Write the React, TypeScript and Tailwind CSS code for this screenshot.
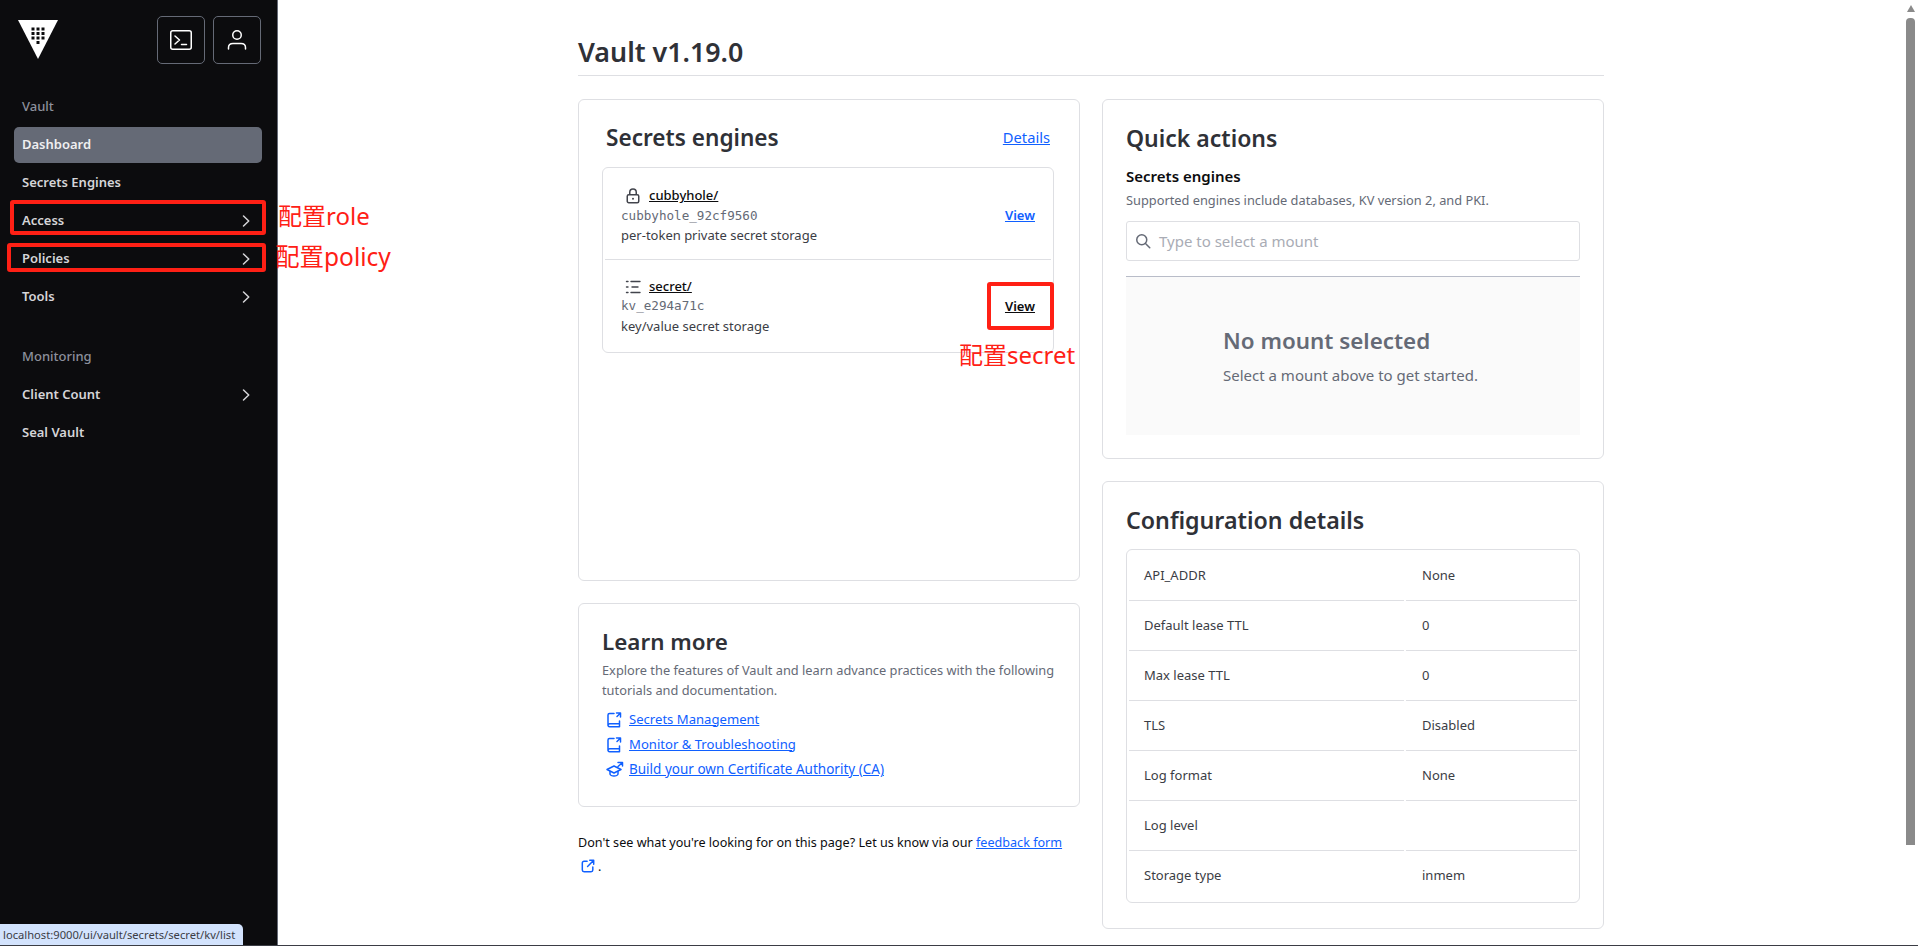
import React from "react";

const Chevron = () => (
  <svg width="16" height="16" viewBox="0 0 16 16" fill="none" stroke="#d5d5d8" strokeWidth="1.5" strokeLinecap="round" strokeLinejoin="round">
    <path d="M5.5 3 10.75 8 5.5 13" />
  </svg>
);

const Logo = () => (
  <svg width="40" height="39" viewBox="0 0 40 39">
    <path d="M0 0h40L20 39z" fill="#fff" />
    <g fill="#0c0c0e">
      <rect x="13.5" y="7.5" width="3" height="3" />
      <rect x="18.5" y="7.5" width="3" height="3" />
      <rect x="23.5" y="7.5" width="3" height="3" />
      <rect x="13.5" y="12" width="3" height="3" />
      <rect x="18.5" y="12" width="3" height="3" />
      <rect x="23.5" y="12" width="3" height="3" />
      <rect x="13.5" y="16.5" width="3" height="3" />
      <rect x="18.5" y="16.5" width="3" height="3" />
      <rect x="23.5" y="16.5" width="3" height="3" />
      <rect x="18.5" y="21" width="3" height="3" />
    </g>
  </svg>
);

const TerminalIcon = () => (
  <svg width="24" height="24" viewBox="0 0 24 24" fill="none" stroke="#fff" strokeWidth="1.5" strokeLinecap="round" strokeLinejoin="round">
    <rect x="1.75" y="2.75" width="20.5" height="18.5" rx="2" />
    <path d="m6 8 4.5 4L6 16M12.5 16.5h5" />
  </svg>
);

const UserIcon = () => (
  <svg width="24" height="24" viewBox="0 0 24 24" fill="none" stroke="#fff" strokeWidth="1.5" strokeLinecap="round">
    <circle cx="12" cy="7" r="4.25" />
    <path d="M3.5 21v-1.5c0-2.500 2-4 4.500-4h8c2.500 0 4.500 1.500 4.500 4V21" />
  </svg>
);

const LockIcon = () => (
  <svg width="16" height="16" viewBox="0 0 16 16" fill="none" stroke="#42444c" strokeWidth="1.5">
    <rect x="2.25" y="6.75" width="11.500" height="8" rx="1.5" />
    <path d="M4.750 6.500V4.250a3.250 3.250 0 0 1 6.500 0V6.500" />
    <circle cx="8" cy="10.750" r="1" fill="#42444c" stroke="none" />
  </svg>
);

const ListIcon = () => (
  <svg width="16" height="16" viewBox="0 0 16 16" fill="none" stroke="#42444c" strokeWidth="1.400" strokeLinecap="round">
    <path d="M1.500 2.500h1.500M1.500 8h1.500M1.500 13.500h1.500M6 2.500h9M7 8h6M6 13.500h9" />
  </svg>
);

const SearchIcon = () => (
  <svg width="16" height="16" viewBox="0 0 16 16" fill="none" stroke="#656a76" strokeWidth="1.500" strokeLinecap="round">
    <circle cx="6.750" cy="6.750" r="5" />
    <path d="m10.500 10.500 4.250 4.250" />
  </svg>
);

const BookLink = () => (
  <svg width="16" height="16" viewBox="0 0 16 16" fill="none" stroke="#1060ff" strokeWidth="1.500" strokeLinecap="round" strokeLinejoin="round" className="shrink-0">
    <path d="M8 1.500H3.500a1.500 1.500 0 0 0-1.500 1.500v10.500A1.750 1.750 0 0 1 3.750 11.750H13.500V9M2 13.250c0 .9.700 1.500 1.700 1.500h9.800v-3" />
    <path d="M10.500 1h4v4M14.250 1.250 11 4.500" />
  </svg>
);

const CapLink = () => (
  <svg width="18" height="16" viewBox="0 0 18 16" fill="none" stroke="#1060ff" strokeWidth="1.500" strokeLinecap="round" strokeLinejoin="round" className="shrink-0">
    <path d="M1 8.500 8 5l7 3.500L8 12z" />
    <path d="M4 10.500v2.500c0 1 2 2 4 2s4-1 4-2v-2.500" />
    <path d="M12 1.500h4.500V5M16 2l-4 3.500" />
  </svg>
);

const ExternalIcon = () => (
  <svg width="14" height="14" viewBox="0 0 16 16" fill="none" stroke="#1060ff" strokeWidth="1.700" strokeLinecap="round" strokeLinejoin="round" className="block">
    <path d="M7 2.500H3.500a2 2 0 0 0-2 2v8a2 2 0 0 0 2 2h8a2 2 0 0 0 2-2V9" />
    <path d="M10 1.500h4.500V6M14.250 1.750 7.500 8.500" />
  </svg>
);

function NavItem({ label, arrow, active }: { label: string; arrow?: boolean; active?: boolean }) {
  return (
    <div
      className={
        "mb-[2px] flex h-9 items-center justify-between rounded-[5px] pl-2 pr-[8px] text-[13px] font-semibold " +
        (active ? "bg-[#656a76] text-[#efeff1]" : "text-[#d5d5d8]")
      }
    >
      <span>{label}</span>
      {arrow && <Chevron />}
    </div>
  );
}

const config: [string, string][] = [
  ["API_ADDR", "None"],
  ["Default lease TTL", "0"],
  ["Max lease TTL", "0"],
  ["TLS", "Disabled"],
  ["Log format", "None"],
  ["Log level", ""],
  ["Storage type", "inmem"],
];

const H2 = "leading-[30px] font-semibold text-[#2f3137]";

export default function App() {
  return (
    <div className="relative flex h-[946px] w-[1918px] overflow-hidden bg-white font-['Noto_Sans','Noto_Sans_CJK_SC',sans-serif] text-[13px] text-[#3b3d45]">
      {/* Sidebar */}
      <aside className="w-[278px] shrink-0 border-r border-[#656a76] bg-[#0c0c0e] pl-[14px] pr-[15px]">
        <div className="flex h-[65px] items-start justify-between pr-[1px] pl-1 pt-4">
          <div className="mt-1">
            <Logo />
          </div>
          <div className="flex gap-2">
            <div className="flex h-12 w-12 items-center justify-center rounded-[5px] border border-[#656a76]">
              <TerminalIcon />
            </div>
            <div className="flex h-12 w-12 items-center justify-center rounded-[5px] border border-[#656a76]">
              <UserIcon />
            </div>
          </div>
        </div>
        <div className="mt-[32px] flex h-5 items-center pl-2 text-[13px] font-medium text-[#8c909c]">Vault</div>
        <div className="mt-[10px]">
          <NavItem label="Dashboard" active />
          <NavItem label="Secrets Engines" />
          <NavItem label="Access" arrow />
          <NavItem label="Policies" arrow />
          <NavItem label="Tools" arrow />
        </div>
        <div className="mt-[32px] flex h-5 items-center pl-2 text-[13px] font-medium text-[#8c909c]">Monitoring</div>
        <div className="mt-[10px]">
          <NavItem label="Client Count" arrow />
          <NavItem label="Seal Vault" />
        </div>
      </aside>

      {/* Main */}
      <main className="flex-1 pl-[300px]">
        <div className="w-[1026px]">
          <h1 className="flex h-[76px] items-end border-b border-[#dedfe3] pb-[3px] text-[26.8px] leading-[40px] font-semibold text-[#2f3137]">
            Vault v1.19.0
          </h1>
          <div className="mt-[23px] flex gap-[22px]">
            {/* Left column */}
            <div className="w-[502px]">
              <section className="h-[482px] rounded-[6px] border border-[#dedfe3] pl-[23px] pr-[25px] pt-[23px]">
                <div className="flex items-start justify-between pr-[4px] pl-[4px]">
                  <h2 className={"text-[22.6px] " + H2}>Secrets engines</h2>
                  <a className="text-[14.7px] leading-[28px] text-[#1060ff] underline">Details</a>
                </div>
                <div className="mt-[14px] rounded-[6px] border border-[#dedfe3] px-[2px]">
                  <div className="flex h-[92px] items-center justify-between border-b border-[#dedfe3] pl-[16px] pr-[16px] pt-[5px]">
                    <div>
                      <div className="flex h-5 items-center gap-[8px] pl-1">
                        <LockIcon />
                        <a className="font-medium text-[#0c0c0e] underline">cubbyhole/</a>
                      </div>
                      <div className="flex h-5 items-center font-['DejaVu_Sans_Mono',monospace] text-[12.6px] text-[#656a76]">cubbyhole_92cf9560</div>
                      <div className="flex h-5 items-center">per-token private secret storage</div>
                    </div>
                    <a className="font-semibold text-[#1060ff] underline">View</a>
                  </div>
                  <div className="flex h-[92px] items-center justify-between pl-[16px] pr-[16px] pt-[1px]">
                    <div>
                      <div className="flex h-5 items-center gap-[8px] pl-1">
                        <ListIcon />
                        <a className="font-medium text-[#0c0c0e] underline">secret/</a>
                      </div>
                      <div className="flex h-5 items-center font-['DejaVu_Sans_Mono',monospace] text-[12.6px] text-[#656a76]">kv_e294a71c</div>
                      <div className="flex h-5 items-center">key/value secret storage</div>
                    </div>
                    <a className="font-semibold text-[#0c0c0e] underline">View</a>
                  </div>
                </div>
              </section>

              <section className="mt-[22px] h-[204px] rounded-[6px] border border-[#dedfe3] px-[23px] pt-[23px]">
                <h2 className={"text-[22.4px] " + H2}>Learn more</h2>
                <p className="mt-[3px] text-[12.8px] leading-5 text-[#656a76]">
                  Explore the features of Vault and learn advance practices with the following tutorials and documentation.
                </p>
                <div className="mt-[7px] flex flex-col pl-[4px]">
                  <a className="flex h-[25px] items-center gap-[7px] text-[13.1px] text-[#1060ff] underline"><BookLink /><span>Secrets Management</span></a>
                  <a className="flex h-[25px] items-center gap-[7px] text-[13.1px] text-[#1060ff] underline"><BookLink /><span>Monitor &amp; Troubleshooting</span></a>
                  <a className="flex h-[24px] items-center gap-[5px] text-[13.5px] text-[#1060ff] underline"><CapLink /><span>Build your own Certificate Authority (CA)</span></a>
                </div>
              </section>

              <p className="mt-[24px] text-[12.6px] leading-6 text-[#0c0c0e]">
                Don't see what you're looking for on this page? Let us know via our{" "}
                <a className="text-[#1060ff] underline">feedback form</a>
                <br />
                <span className="ml-[3px] mr-[3px] inline-block align-[-2px]"><ExternalIcon /></span>.
              </p>
            </div>

            {/* Right column */}
            <div className="w-[502px]">
              <section className="h-[360px] rounded-[6px] border border-[#dedfe3] px-[23px] pt-[23px]">
                <h2 className={"text-[23px] " + H2}>Quick actions</h2>
                <div className="mt-[13px] text-[15px] leading-5 font-semibold text-[#0c0c0e]">Secrets engines</div>
                <p className="mt-[4px] text-[12.8px] leading-5 text-[#656a76]">Supported engines include databases, KV version 2, and PKI.</p>
                <div className="mt-[11px] flex h-10 items-center gap-[8px] rounded-[3px] border border-[#dedfe3] pl-[8px] text-[15px] text-[#a9acb5]">
                  <SearchIcon />
                  <span>Type to select a mount</span>
                </div>
                <div className="mt-[15px] h-[159px] border-t border-[#b8bcc8] bg-[#fafafa] pl-[97px] pt-[50px]">
                  <div className="text-[22.4px] leading-[28px] font-semibold text-[#656a76]">No mount selected</div>
                  <div className="mt-[10px] text-[15px] leading-5 text-[#656a76]">Select a mount above to get started.</div>
                </div>
              </section>

              <section className="mt-[22px] h-[448px] rounded-[6px] border border-[#dedfe3] px-[23px] pt-[23px]">
                <h2 className={"text-[23.2px] " + H2}>Configuration details</h2>
                <div className="mt-[14px] rounded-[6px] border border-[#dedfe3] px-[2px] pb-[1px]">
                  {config.map(([k, v], i) => (
                    <div key={k} className={"grid h-[50px] grid-cols-[275px_1fr] gap-[2px] " + (i === 0 ? "mt-[1px]" : "")}>
                      <div className={"flex items-center pl-[15px] " + (i < 6 ? "border-b border-[#dedfe3]" : "")}>{k}</div>
                      <div className={"flex items-center pl-[16px] " + (i < 6 ? "border-b border-[#dedfe3]" : "")}>{v}</div>
                    </div>
                  ))}
                </div>
              </section>
            </div>
          </div>
        </div>
      </main>

      {/* Fake scrollbar */}
      <div className="absolute right-[3px] top-[5px] h-0 w-0 border-x-[4.5px] border-b-[7px] border-x-transparent border-b-[#8a8a8a]" />
      <div className="absolute right-[3px] top-[18px] h-[827px] w-[9px] rounded-t-[4px] bg-[#8a8a8a]" />

      {/* Annotations */}
      <div className="absolute left-[10px] top-[200px] h-[35px] w-[256px] rounded-[3px] border-[4px] border-[#ff2015]" />
      <div className="absolute left-[7px] top-[243px] h-[29px] w-[259px] rounded-[3px] border-[4px] border-[#ff2015]" />
      <div className="absolute left-[987px] top-[282px] h-[48px] w-[67px] rounded-[3px] border-[4px] border-[#ff2015]" />
      <div className="absolute left-[278px] top-[199px] text-[24px] leading-[34px] text-[#ff2015]">配置role</div>
      <div className="absolute left-[275px] top-[240px] text-[24.5px] leading-[34px] text-[#ff2015]">配置policy</div>
      <div className="absolute left-[959px] top-[338px] text-[24px] leading-[34px] text-[#ff2015]">配置secret</div>

      {/* Status bubble */}
      <div className="absolute bottom-0 left-0 flex h-[22px] w-[243px] items-center rounded-tr-[5px] bg-[#d3e3fd] pl-[3px] text-[11.2px] text-[#3b3d45]">
        localhost:9000/ui/vault/secrets/secret/kv/list
      </div>
      <div className="absolute bottom-0 left-0 h-px w-full bg-[#3b3d45]" />
    </div>
  );
}
